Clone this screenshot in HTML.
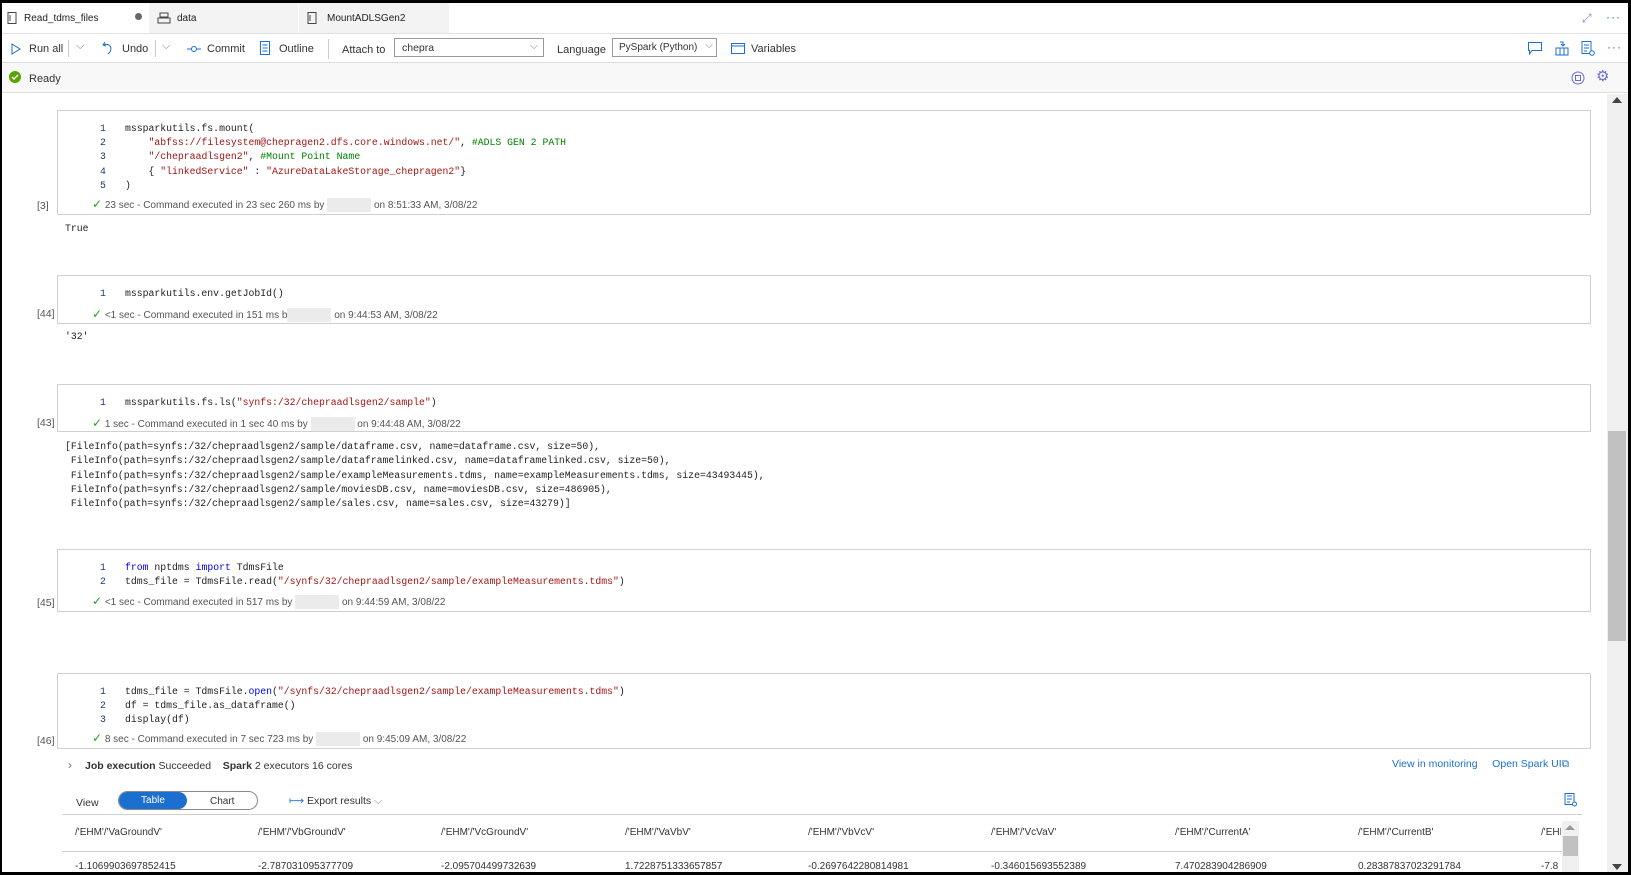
<!DOCTYPE html>
<html><head><meta charset="utf-8"><style>
*{box-sizing:border-box;margin:0;padding:0}
body{width:1631px;height:875px;background:#000;overflow:hidden;position:relative;font-family:"Liberation Sans",sans-serif;font-size:11px;color:#333}
#app{position:absolute;left:2px;top:3px;width:1626px;height:869px;background:#fff;overflow:hidden}
.a{position:absolute;white-space:nowrap}
.tab{position:absolute;top:0;height:30px;background:#f3f3f3;font-size:10px;color:#222;padding:10px 0 0 22px}
.tb{font-size:11px;color:#333}
.cell{position:absolute;left:55px;width:1534px;border:1px solid #d0d0d0;background:#fff}
.mono{font-family:"Liberation Mono",monospace;font-size:9.8px;color:#222}
.ln{position:absolute;left:42px;color:#1b3a78}
.cd{position:absolute;left:67px}
.st{color:#555;font-size:10px;position:absolute;left:34px;font-family:"Liberation Sans",sans-serif}
.ck{color:#2e9b2e;font-size:12px}
.blur{display:inline-block;width:44px;height:14px;background:#ebebeb;vertical-align:middle}
.ex{position:absolute;left:35px;font-size:10.5px;color:#555}
.s{color:#a31515}.c{color:#008000}.k{color:#0000ff}
.hd{position:absolute;top:824px;font-size:10px;color:#333}
.vl{position:absolute;top:858px;font-size:10px;color:#333}
</style></head><body><div id="app">
<div style="position:absolute;left:0;top:0;width:1626px;height:31px;background:#fff;border-bottom:1px solid #e1e1e1"></div>
<div class="tab" style="left:0;width:147px;background:#fff">Read_tdms_files<span style="position:absolute;left:133px;top:10px;width:7px;height:7px;border-radius:50%;background:#666"></span></div>
<div class="tab" style="left:147px;width:149px;padding-left:28px">data</div>
<div class="tab" style="left:297px;width:150px;padding-left:28px">MountADLSGen2</div>
<svg class="a" style="left:5px;top:9px" width="10" height="13"><rect x="1" y="0.5" width="8" height="11" fill="none" stroke="#444"/><line x1="3" y1="3" x2="3" y2="9" stroke="#444"/></svg>
<svg class="a" style="left:155px;top:9px" width="14" height="12"><path d="M3 1h8v4H3zM1 6h12v5H1z" fill="none" stroke="#444"/></svg>
<svg class="a" style="left:305px;top:9px" width="10" height="13"><rect x="1" y="0.5" width="8" height="11" fill="none" stroke="#444"/><line x1="3" y1="3" x2="3" y2="9" stroke="#444"/></svg>
<div class="a" style="left:1580px;top:8px;color:#8a8adc;font-size:12px">⤢</div>
<div class="a" style="left:1604px;top:7px;color:#1a6fd0;font-size:12px;letter-spacing:1px">···</div>
<div style="position:absolute;left:0;top:31px;width:1626px;height:29px;border-bottom:1px solid #dcdcdc"></div>
<svg class="a" style="left:9px;top:40px" width="10" height="12"><path d="M1 1L9 6L1 11Z" fill="none" stroke="#1a6fd0"/></svg>
<div class="a tb" style="left:27px;top:40px">Run all</div>
<div class="a" style="left:66px;top:37px;width:1px;height:17px;background:#ccc"></div>
<div class="a" style="left:74px;top:37px;color:#777">⌵</div>
<svg class="a" style="left:100px;top:38px" width="12" height="14"><path d="M3 1L1 4L4 5M1 4C6 2 11 5 8 11L6 13" fill="none" stroke="#1a6fd0"/></svg>
<div class="a tb" style="left:120px;top:40px">Undo</div>
<div class="a" style="left:153px;top:37px;width:1px;height:17px;background:#ccc"></div>
<div class="a" style="left:160px;top:37px;color:#777">⌵</div>
<svg class="a" style="left:185px;top:42px" width="14" height="8"><line x1="0" y1="4" x2="14" y2="4" stroke="#1a6fd0"/><circle cx="7" cy="4" r="2.5" fill="#fff" stroke="#1a6fd0"/></svg>
<div class="a tb" style="left:205px;top:40px">Commit</div>
<svg class="a" style="left:258px;top:38px" width="10" height="14"><rect x="0.5" y="0.5" width="9" height="13" fill="none" stroke="#1a6fd0"/><path d="M2.5 4h5M2.5 7h5M2.5 10h5" stroke="#1a6fd0"/></svg>
<div class="a tb" style="left:277px;top:40px">Outline</div>
<div class="a" style="left:326px;top:36px;width:1px;height:20px;background:#ccc"></div>
<div class="a tb" style="left:340px;top:41px">Attach to</div>
<div class="a" style="left:392px;top:35px;width:150px;height:19px;border:1px solid #999;padding:3px 0 0 7px;font-size:10.5px">chepra<span style="position:absolute;right:5px;top:1px;color:#888">⌵</span></div>
<div class="a tb" style="left:555px;top:41px">Language</div>
<div class="a" style="left:610px;top:35px;width:105px;height:19px;border:1px solid #999;padding:3px 0 0 6px;font-size:10px">PySpark (Python)<span style="position:absolute;right:3px;top:1px;color:#888">⌵</span></div>
<svg class="a" style="left:729px;top:40px" width="14" height="11"><rect x="0.5" y="0.5" width="13" height="10" fill="none" stroke="#1a6fd0"/><line x1="0" y1="3" x2="14" y2="3" stroke="#1a6fd0"/></svg>
<div class="a tb" style="left:749px;top:40px">Variables</div>
<svg class="a" style="left:1526px;top:39px" width="14" height="13"><path d="M0.5 0.5h13v8H4L1.5 12V8.5h-1z" fill="none" stroke="#1a6fd0"/></svg>
<svg class="a" style="left:1553px;top:38px" width="14" height="15"><path d="M5 1h3v4M6 3l2 2 2-2M1 7h12v7H1zM5 7v7M9 7v7" fill="none" stroke="#1a6fd0"/></svg>
<svg class="a" style="left:1579px;top:38px" width="14" height="15"><path d="M1 .5h9v12H1zM3 4h5M3 7h5M3 10h3" fill="none" stroke="#1a6fd0"/><circle cx="11" cy="12" r="2.3" fill="#fff" stroke="#1a6fd0"/></svg>
<div class="a" style="left:1605px;top:37px;color:#1a6fd0;font-size:12px;letter-spacing:1px">···</div>
<div style="position:absolute;left:0;top:60px;width:1626px;height:30px;background:#f8f8f8;border-bottom:1px solid #dcdcdc"></div>
<svg class="a" style="left:7px;top:68px" width="12" height="12"><circle cx="6" cy="6" r="6" fill="#57a300"/><path d="M3 6l2 2 4-4" stroke="#fff" stroke-width="1.5" fill="none"/></svg>
<div class="a tb" style="left:27px;top:70px">Ready</div>
<svg class="a" style="left:1569px;top:68px" width="14" height="14"><circle cx="7" cy="7" r="6" fill="none" stroke="#6b6bd6"/><rect x="4.5" y="4.5" width="5" height="5" fill="none" stroke="#6b6bd6"/></svg>
<div class="a" style="left:1594px;top:64px;color:#6b6bd6;font-size:15px">⚙</div>
<div class="a" style="left:1605px;top:91px;width:21px;height:778px;background:#f0f0f0"></div>
<div class="a" style="left:1606px;top:428px;width:18px;height:210px;background:#c1c1c1"></div>
<div class="a" style="left:1610px;top:94px;width:0;height:0;border-left:5px solid transparent;border-right:5px solid transparent;border-bottom:6px solid #444"></div>
<div class="a" style="left:1610px;top:861px;width:0;height:0;border-left:5px solid transparent;border-right:5px solid transparent;border-top:6px solid #444"></div>

<div class="cell mono" style="top:107px;height:105px">
<div class="ln" style="top:12px">1</div><div class="cd" style="top:12px">mssparkutils.fs.mount(</div>
<div class="ln" style="top:26px">2</div><div class="cd" style="top:26px">&nbsp;&nbsp;&nbsp;&nbsp;<span class="s">"abfss://filesystem@chepragen2.dfs.core.windows.net/"</span>, <span class="c">#ADLS GEN 2 PATH</span></div>
<div class="ln" style="top:40px">3</div><div class="cd" style="top:40px">&nbsp;&nbsp;&nbsp;&nbsp;<span class="s">"/chepraadlsgen2"</span>, <span class="c">#Mount Point Name</span></div>
<div class="ln" style="top:55px">4</div><div class="cd" style="top:55px">&nbsp;&nbsp;&nbsp;&nbsp;{ <span class="s">"linkedService"</span> : <span class="s">"AzureDataLakeStorage_chepragen2"</span>}</div>
<div class="ln" style="top:69px">5</div><div class="cd" style="top:69px">)</div>
<div class="st" style="top:86px"><span class="ck">✓</span> 23 sec - Command executed in 23 sec 260 ms by <span class="blur"></span> on 8:51:33 AM, 3/08/22</div>
</div>
<div class="ex" style="top:197px">[3]</div>
<div class="a mono" style="left:63px;top:220px">True</div>

<div class="cell mono" style="top:272px;height:49px">
<div class="ln" style="top:12px">1</div><div class="cd" style="top:12px">mssparkutils.env.getJobId()</div>
<div class="st" style="top:31px"><span class="ck">✓</span> &lt;1 sec - Command executed in 151 ms b<span class="blur"></span> on 9:44:53 AM, 3/08/22</div>
</div>
<div class="ex" style="top:305px">[44]</div>
<div class="a mono" style="left:63px;top:328px">'32'</div>

<div class="cell mono" style="top:381px;height:48px">
<div class="ln" style="top:12px">1</div><div class="cd" style="top:12px">mssparkutils.fs.ls(<span class="s">"synfs:/32/chepraadlsgen2/sample"</span>)</div>
<div class="st" style="top:31px"><span class="ck">✓</span> 1 sec - Command executed in 1 sec 40 ms by <span class="blur"></span> on 9:44:48 AM, 3/08/22</div>
</div>
<div class="ex" style="top:414px">[43]</div>
<div class="a mono" style="left:63px;top:437px;line-height:14.3px">[FileInfo(path=synfs:/32/chepraadlsgen2/sample/dataframe.csv, name=dataframe.csv, size=50),<br>&nbsp;FileInfo(path=synfs:/32/chepraadlsgen2/sample/dataframelinked.csv, name=dataframelinked.csv, size=50),<br>&nbsp;FileInfo(path=synfs:/32/chepraadlsgen2/sample/exampleMeasurements.tdms, name=exampleMeasurements.tdms, size=43493445),<br>&nbsp;FileInfo(path=synfs:/32/chepraadlsgen2/sample/moviesDB.csv, name=moviesDB.csv, size=486905),<br>&nbsp;FileInfo(path=synfs:/32/chepraadlsgen2/sample/sales.csv, name=sales.csv, size=43279)]</div>

<div class="cell mono" style="top:546px;height:63px">
<div class="ln" style="top:12px">1</div><div class="cd" style="top:12px"><span class="k">from</span> nptdms <span class="k">import</span> TdmsFile</div>
<div class="ln" style="top:26px">2</div><div class="cd" style="top:26px">tdms_file = TdmsFile.read(<span class="s">"/synfs/32/chepraadlsgen2/sample/exampleMeasurements.tdms"</span>)</div>
<div class="st" style="top:44px"><span class="ck">✓</span> &lt;1 sec - Command executed in 517 ms by <span class="blur"></span> on 9:44:59 AM, 3/08/22</div>
</div>
<div class="ex" style="top:594px">[45]</div>

<div class="cell mono" style="top:670px;height:76px">
<div class="ln" style="top:12px">1</div><div class="cd" style="top:12px">tdms_file = TdmsFile.<span class="k">open</span>(<span class="s">"/synfs/32/chepraadlsgen2/sample/exampleMeasurements.tdms"</span>)</div>
<div class="ln" style="top:26px">2</div><div class="cd" style="top:26px">df = tdms_file.as_dataframe()</div>
<div class="ln" style="top:40px">3</div><div class="cd" style="top:40px">display(df)</div>
<div class="st" style="top:57px"><span class="ck">✓</span> 8 sec - Command executed in 7 sec 723 ms by <span class="blur"></span> on 9:45:09 AM, 3/08/22</div>
</div>
<div class="ex" style="top:732px">[46]</div>

<div class="a" style="left:66px;top:755px;color:#777;font-size:12px">›</div>
<div class="a" style="left:83px;top:757px;font-size:10.5px"><b>Job execution</b> Succeeded &nbsp;&nbsp; <b>Spark</b> 2 executors 16 cores</div>
<div class="a" style="left:1390px;top:755px;font-size:10.5px;color:#1a6fd0">View in monitoring &nbsp;&nbsp;&nbsp; Open Spark UI⧉</div>

<div class="a" style="left:74px;top:794px;font-size:10.5px">View</div>
<div class="a" style="left:116px;top:788px;width:140px;height:19px;border:1px solid #888;border-radius:10px"></div>
<div class="a" style="left:117px;top:789px;width:68px;height:17px;background:#1a6fd0;border-radius:9px;color:#fff;font-size:10px;text-align:center;line-height:17px">Table</div>
<div class="a" style="left:208px;top:793px;font-size:10px">Chart</div>
<div class="a" style="left:287px;top:792px;font-size:10.5px"><span style="color:#1a6fd0">⟼</span> Export results <span style="color:#888">⌵</span></div>
<svg class="a" style="left:1562px;top:790px" width="13" height="14"><path d="M1 .5h9v11H1zM3 3h5M3 6h5M3 9h3" fill="none" stroke="#1a6fd0"/><circle cx="10.5" cy="11" r="2" fill="#fff" stroke="#1a6fd0"/></svg>

<div class="a" style="left:60px;top:811px;width:1520px;height:1px;background:#d0d0d0"></div>
<div class="a" style="left:60px;top:848px;width:1503px;height:1px;background:#d0d0d0"></div>
<div class="hd" style="left:73px">/'EHM'/'VaGroundV'</div>
<div class="hd" style="left:256px">/'EHM'/'VbGroundV'</div>
<div class="hd" style="left:439px">/'EHM'/'VcGroundV'</div>
<div class="hd" style="left:623px">/'EHM'/'VaVbV'</div>
<div class="hd" style="left:806px">/'EHM'/'VbVcV'</div>
<div class="hd" style="left:989px">/'EHM'/'VcVaV'</div>
<div class="hd" style="left:1173px">/'EHM'/'CurrentA'</div>
<div class="hd" style="left:1356px">/'EHM'/'CurrentB'</div>
<div class="hd" style="left:1539px;width:20px;overflow:hidden">/'EHM'</div>
<div class="vl" style="left:73px">-1.1069903697852415</div>
<div class="vl" style="left:256px">-2.787031095377709</div>
<div class="vl" style="left:439px">-2.095704499732639</div>
<div class="vl" style="left:623px">1.7228751333657857</div>
<div class="vl" style="left:806px">-0.2697642280814981</div>
<div class="vl" style="left:989px">-0.346015693552389</div>
<div class="vl" style="left:1173px">7.470283904286909</div>
<div class="vl" style="left:1356px">0.28387837023291784</div>
<div class="vl" style="left:1539px;width:20px;overflow:hidden">-7.8</div>
<div class="a" style="left:1560px;top:818px;width:17px;height:51px;background:#f0f0f0"></div>
<div class="a" style="left:1563px;top:822px;width:0;height:0;border-left:5px solid transparent;border-right:5px solid transparent;border-bottom:5px solid #999"></div>
<div class="a" style="left:1561px;top:833px;width:15px;height:20px;background:#c1c1c1"></div>
</div></body></html>
